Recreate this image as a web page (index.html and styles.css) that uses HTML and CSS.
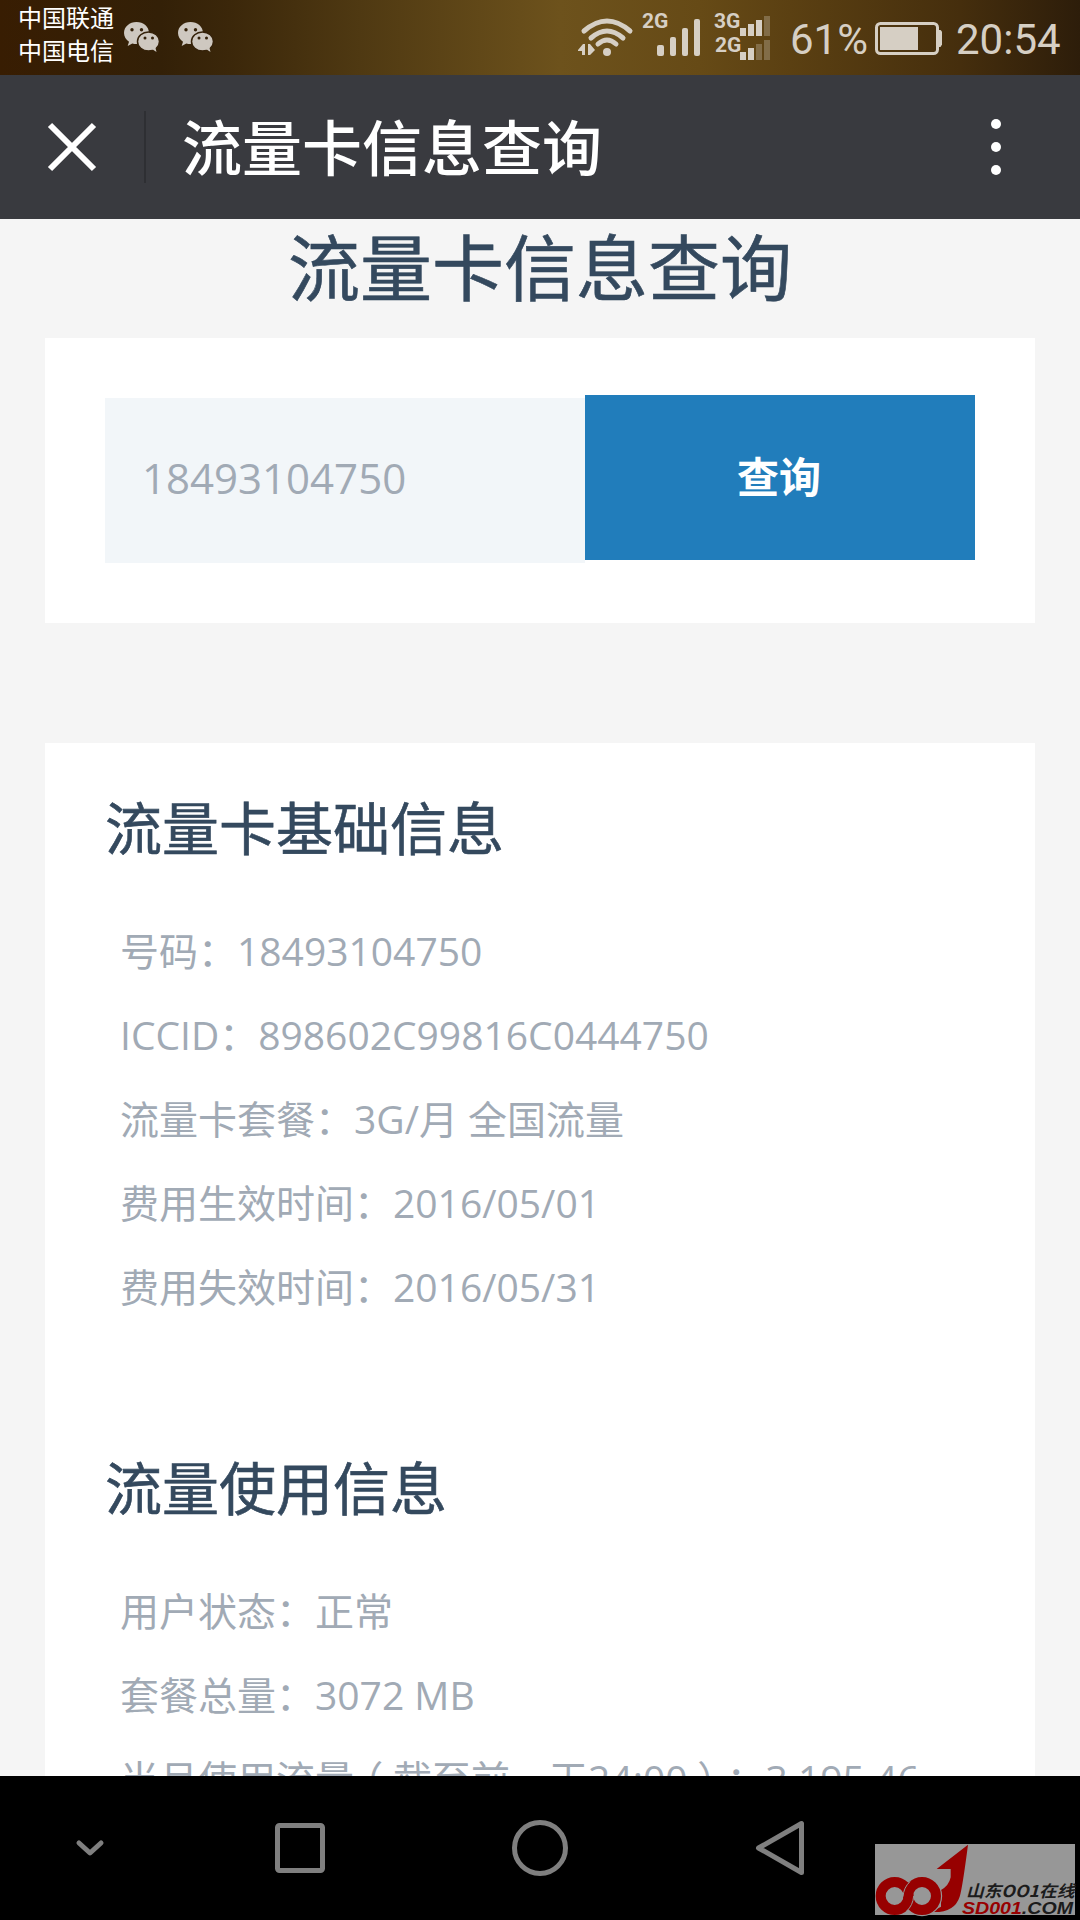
FILE: index.html
```html
<!DOCTYPE html>
<html lang="zh-CN">
<head>
  <meta charset="UTF-8">
  <title>流量卡信息查询</title>
  <link rel="stylesheet" href="styles.css">
</head>
<body>
  <!-- 状态栏 -->
  <div class="statusbar">
    <div class="carriers">
      <span>中国联通</span>
      <span>中国电信</span>
    </div>
    <svg class="wechat" viewBox="0 0 36 30">
      <path d="M12.500 0C5.600 0 0 4.700 0 11c0 3.600 2 6.700 5 8.700L3.700 24l4.600-2.500c1.400.4 2.800.6 4.200.6C19.400 22.100 25 17.400 25 11S19.400 0 12.500 0z"/>
      <ellipse class="front" cx="24.500" cy="19.500" rx="11" ry="9.600"/>
      <path d="M28 27l4.500 3-1.200-5z"/>
      <g class="eyes"><circle cx="8" cy="7.700" r="1.700"/><circle cx="17.500" cy="7.700" r="1.700"/><circle cx="21" cy="16" r="1.500"/><circle cx="28.500" cy="16" r="1.500"/></g>
    </svg>
    <svg class="wechat" viewBox="0 0 36 30">
      <path d="M12.500 0C5.600 0 0 4.700 0 11c0 3.600 2 6.700 5 8.700L3.700 24l4.600-2.500c1.400.4 2.800.6 4.200.6C19.400 22.100 25 17.400 25 11S19.400 0 12.500 0z"/>
      <ellipse class="front" cx="24.500" cy="19.500" rx="11" ry="9.600"/>
      <path d="M28 27l4.500 3-1.200-5z"/>
      <g class="eyes"><circle cx="8" cy="7.700" r="1.700"/><circle cx="17.500" cy="7.700" r="1.700"/><circle cx="21" cy="16" r="1.500"/><circle cx="28.500" cy="16" r="1.500"/></g>
    </svg>
    <div class="status-right">
      <svg class="wifi" viewBox="0 0 54 38">
        <g class="arcs"><path d="M6 12q23-20 46 0"/><path d="M13 19q16-14 32 0"/><path d="M20 25q9-8 18 0"/></g>
        <circle cx="29" cy="33" r="4"/>
        <path d="M0 31l5-6h2v11H4v-4H0zM10 25h2l5 6-5 5h-2z"/>
      </svg>
      <svg class="signal" viewBox="0 0 60 45">
        <text x="0" y="15">2G</text>
        <rect x="15" y="32" width="7" height="11" rx="2"/>
        <rect x="28" y="24" width="6" height="19" rx="2"/>
        <rect x="40" y="15" width="6" height="28" rx="2"/>
        <rect x="52" y="6" width="6" height="37" rx="2"/>
      </svg>
      <svg class="signal-dual" viewBox="0 0 56 48">
        <text x="-1" y="15">3G</text>
        <text x="0" y="39">2G</text>
        <rect x="25" y="15" width="6" height="8"/><rect x="33" y="11" width="6" height="12"/><rect x="41" y="7" width="6" height="16"/><rect class="dim" x="49" y="3" width="6" height="20"/>
        <rect x="25" y="39" width="6" height="8"/><rect x="33" y="35" width="6" height="12"/><rect class="dim" x="41" y="31" width="6" height="16"/><rect class="dim" x="49" y="27" width="6" height="20"/>
      </svg>
      <span class="percent">61%</span>
      <svg class="battery" viewBox="0 0 67 33">
        <rect class="shell" x="1.500" y="1.500" width="61" height="30" rx="4"/>
        <rect x="5" y="5" width="38" height="23"/>
        <path d="M64 8h1.500l1.500 1.500v13L65.500 25H64z"/>
      </svg>
      <span class="clock">20:54</span>
    </div>
  </div>

  <!-- 标题栏 -->
  <header>
    <svg class="close" viewBox="0 0 48 48"><path d="M2 2l44 44M46 2L2 46"/></svg>
    <div class="title">流量卡信息查询</div>
    <svg class="more" viewBox="0 0 10 56"><circle cx="5" cy="5" r="5"/><circle cx="5" cy="28" r="5"/><circle cx="5" cy="51" r="5"/></svg>
  </header>

  <main>
    <h1>流量卡信息查询</h1>

    <form class="card search">
      <input type="text" class="number" value="18493104750">
      <button type="button" class="query">查询</button>
    </form>

    <div class="card info">
      <section>
        <h2>流量卡基础信息</h2>
        <ul>
          <li>号码：18493104750</li>
          <li>ICCID：898602C99816C0444750</li>
          <li>流量卡套餐：3G/月 全国流量</li>
          <li>费用生效时间：2016/05/01</li>
          <li>费用失效时间：2016/05/31</li>
        </ul>
      </section>
      <section>
        <h2>流量使用信息</h2>
        <ul>
          <li>用户状态：正常</li>
          <li>套餐总量：3072 MB</li>
          <li>当月使用流量<span class="paren">（</span>截至前一天24:00<span class="paren">）</span>：3,195.46</li>
        </ul>
      </section>
    </div>
  </main>

  <!-- 导航键 -->
  <footer>
    <svg class="key" viewBox="0 0 60 60"><path class="fold" d="M19 25l11 10 11-10"/></svg>
    <svg class="key" viewBox="0 0 60 60"><rect x="7.500" y="7.500" width="45" height="45" rx="2"/></svg>
    <svg class="key" viewBox="0 0 60 60"><circle cx="30" cy="30" r="25.500"/></svg>
    <svg class="key" viewBox="0 0 60 60"><path d="M51.500 5.500v49L8.500 30z"/></svg>
    <svg class="sitemark" viewBox="45 222 600 213">
      <path class="arrow" d="M324 224L230 297h42v25q-5 25-29 38v50l-30 16q70 4 86-46 8-25 25-156z"/>
      <circle class="gap" cx="186" cy="378" r="58"/>
      <g class="rings"><circle cx="186" cy="378" r="42"/><circle cx="104" cy="378" r="42"/></g>
      <path class="seam" d="M150 335q-19 17-21 45M161 378q-2 28-21 45"/>
      <text class="site-name" x="318" y="381" textLength="325" lengthAdjust="spacingAndGlyphs">山东OO1在线</text>
      <text class="site-url" x="306" y="431" textLength="333" lengthAdjust="spacingAndGlyphs"><tspan class="red">SD001</tspan>.COM</text>
    </svg>
  </footer>
</body>
</html>
```
FILE: styles.css
```css
* {box-sizing:border-box;}
body {
  margin:0; height:1920px; overflow:hidden; display:flex; flex-direction:column;
  background:#f5f5f5; font-family:"Open Sans", "Noto Sans CJK SC", sans-serif;
  text-spacing-trim:space-all;
}
h1, h2, ul {margin:0; padding:0; font-weight:400;}
svg {display:block; flex:none; overflow:visible;}

/* 状态栏 */
.statusbar {
  flex:none; height:75px; display:flex; align-items:flex-start; padding-left:18px;
  background:linear-gradient(90deg, #381d02 0, #332007 160px, #3b270a 230px, #4f3912 360px, #6d521c 560px, #664a16 700px, #5b4012 790px, #452e0d 960px, #2d1d0a 1080px);
  color:#d6cfc4; fill:#d6cfc4; font-family:Roboto, sans-serif;
}
.carriers {
  display:flex; flex-direction:column; width:106px; font:24px/33px "Noto Sans CJK SC", sans-serif; color:#fff;
}
.wechat {width:36px; height:30px; margin:22px 18px 0 0; fill:#cec8c0;}
.wechat .front {stroke:#35220a; stroke-width:1.5;}
.wechat .eyes {fill:#35220a;}
.status-right {display:flex; align-items:flex-start; margin-left:346px;}
.wifi {width:54px; height:38px; margin-top:19px;}
.wifi .arcs {fill:none; stroke:#d6cfc4; stroke-width:5; stroke-linecap:round;}
.signal {width:60px; height:45px; margin:13px 0 0 10px;}
.signal-dual {width:56px; height:48px; margin:13px 0 0 13px;}
.signal text, .signal-dual text {font-size:21px; font-weight:700;}
.dim {opacity:.3;}
.percent, .clock {font-size:42px; line-height:48px; margin-top:16px;}
.percent {width:85px; margin-left:19px;}
.battery {width:67px; height:33px; margin-top:22px;}
.battery .shell {fill:none; stroke:#d6cfc4; stroke-width:3;}
.clock {margin-left:14px;}

/* 标题栏 */
header {
  flex:none; height:144px; display:flex; align-items:center; padding:0 79px 0 48px;
  background:#393a3f; color:#fff; fill:#fff;
}
.close {width:48px; height:48px; stroke:#fff; stroke-width:6;}
.title {
  flex:1; height:72px; margin-left:48px; padding-left:36px; border-left:2px solid #2e2f33;
  font-size:60px; line-height:74px; font-weight:500; white-space:nowrap;
}
.more {width:10px; height:56px;}

/* 内容 */
main {flex:1; min-height:0; overflow:hidden; padding:0 45px;}
h1, h2 {color:#34495e; -webkit-text-stroke:.6px #34495e;}
h1 {height:119px; font-size:72px; line-height:97px; text-align:center;}
.card {background:#fff;}
.search {display:flex; height:285px; padding:57px 60px 0;}
.number {
  width:480px; height:165px; margin-top:3px; padding:0 37px 6px; border:0; border-radius:0;
  background:#f2f6f9; color:#a1aab5; font:42px "Open Sans", sans-serif;
}
.query {
  width:390px; height:165px; padding:0 2px 7px 0; border:0; background:#217dbb; color:#fff;
  font:700 42px "Open Sans", "Noto Sans CJK SC", sans-serif;
}
.info {margin-top:120px; padding:45px 60px 0;}
.info section {margin-bottom:119px;}
h2 {height:80px; margin-bottom:41px; font-size:57px; line-height:80px;}
ul {list-style:none; padding-left:15px;}
li {height:84px; font-size:39px; line-height:83px; color:#a1aab5; white-space:nowrap;}
/* 半宽括号，左右补齐 */
.paren {font-feature-settings:"halt"; padding:0 9.75px;}

/* 导航键 */
footer {
  flex:none; position:relative; height:144px; display:grid; grid-template-columns:180px 240px 240px 240px;
  align-items:center; justify-items:center; background:#000;
}
.key {width:60px; height:60px; fill:none; stroke:#7f7f7f; stroke-width:5; stroke-linejoin:round;}
.key .fold {stroke-linecap:round;}
.sitemark {position:absolute; right:5px; bottom:5px; width:200px; height:71px; background:#979797;}
.rings {fill:none; stroke:#970000; stroke-width:30;}
.gap {fill:#979797; stroke:#979797; stroke-width:5;}
.seam {fill:none; stroke:#979797; stroke-width:3;}
.arrow, .red {fill:#970000;}
.site-name {font:italic 700 49px "Noto Sans CJK SC", sans-serif; fill:#1c1c1c;}
.site-url {font:italic 700 48px "Liberation Sans", sans-serif; fill:#1c1c1c;}
```
